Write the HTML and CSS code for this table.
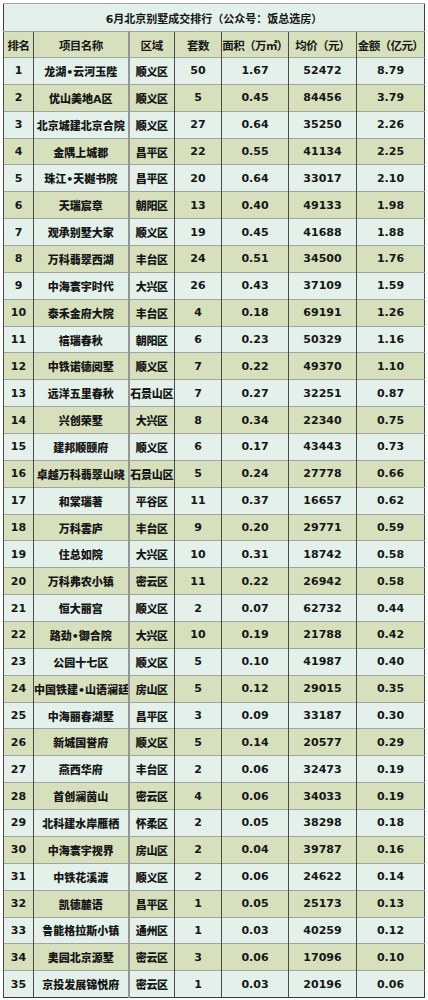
FILE: index.html
```html
<!DOCTYPE html>
<html lang="zh-CN">
<head>
  <meta charset="UTF-8" />
  <meta name="viewport" content="width=device-width, initial-scale=1.0" />
  <title>6月北京别墅成交排行</title>
  <link rel="stylesheet" href="styles.css">
</head>
<body>
  <div class="wrap">
    <table class="rank">
      <colgroup>
        <col class="c-no"><col class="c-name"><col class="c-area"><col class="c-num"><col class="c-size"><col class="c-price"><col class="c-total">
      </colgroup>
      <thead>
        <tr class="title"><th colspan="7">6月北京别墅成交排行（公众号：饭总选房）</th></tr>
        <tr class="head">
          <th>排名</th><th>项目名称</th><th class="area">区域</th><th>套数</th><th>面积（万㎡）</th><th>均价（元）</th><th>金额（亿元）</th>
        </tr>
      </thead>
      <tbody>
        <tr><td>1</td><td>龙湖•云河玉陛</td><td class="area">顺义区</td><td>50</td><td>1.67</td><td>52472</td><td>8.79</td></tr>
        <tr><td>2</td><td>优山美地A区</td><td class="area">顺义区</td><td>5</td><td>0.45</td><td>84456</td><td>3.79</td></tr>
        <tr><td>3</td><td>北京城建北京合院</td><td class="area">顺义区</td><td>27</td><td>0.64</td><td>35250</td><td>2.26</td></tr>
        <tr><td>4</td><td>金隅上城郡</td><td class="area">昌平区</td><td>22</td><td>0.55</td><td>41134</td><td>2.25</td></tr>
        <tr><td>5</td><td>珠江•天樾书院</td><td class="area">昌平区</td><td>20</td><td>0.64</td><td>33017</td><td>2.10</td></tr>
        <tr><td>6</td><td>天瑞宸章</td><td class="area">朝阳区</td><td>13</td><td>0.40</td><td>49133</td><td>1.98</td></tr>
        <tr><td>7</td><td>观承别墅大家</td><td class="area">顺义区</td><td>19</td><td>0.45</td><td>41688</td><td>1.88</td></tr>
        <tr><td>8</td><td>万科翡翠西湖</td><td class="area">丰台区</td><td>24</td><td>0.51</td><td>34500</td><td>1.76</td></tr>
        <tr><td>9</td><td>中海寰宇时代</td><td class="area">大兴区</td><td>26</td><td>0.43</td><td>37109</td><td>1.59</td></tr>
        <tr><td>10</td><td>泰禾金府大院</td><td class="area">丰台区</td><td>4</td><td>0.18</td><td>69191</td><td>1.26</td></tr>
        <tr><td>11</td><td>禧瑞春秋</td><td class="area">朝阳区</td><td>6</td><td>0.23</td><td>50329</td><td>1.16</td></tr>
        <tr><td>12</td><td>中铁诺德阅墅</td><td class="area">顺义区</td><td>7</td><td>0.22</td><td>49370</td><td>1.10</td></tr>
        <tr><td>13</td><td>远洋五里春秋</td><td class="area">石景山区</td><td>7</td><td>0.27</td><td>32251</td><td>0.87</td></tr>
        <tr><td>14</td><td>兴创荣墅</td><td class="area">大兴区</td><td>8</td><td>0.34</td><td>22340</td><td>0.75</td></tr>
        <tr><td>15</td><td>建邦顺颐府</td><td class="area">顺义区</td><td>6</td><td>0.17</td><td>43443</td><td>0.73</td></tr>
        <tr><td>16</td><td>卓越万科翡翠山晓</td><td class="area">石景山区</td><td>5</td><td>0.24</td><td>27778</td><td>0.66</td></tr>
        <tr><td>17</td><td>和棠瑞著</td><td class="area">平谷区</td><td>11</td><td>0.37</td><td>16657</td><td>0.62</td></tr>
        <tr><td>18</td><td>万科雲庐</td><td class="area">丰台区</td><td>9</td><td>0.20</td><td>29771</td><td>0.59</td></tr>
        <tr><td>19</td><td>住总如院</td><td class="area">大兴区</td><td>10</td><td>0.31</td><td>18742</td><td>0.58</td></tr>
        <tr><td>20</td><td>万科弗农小镇</td><td class="area">密云区</td><td>11</td><td>0.22</td><td>26942</td><td>0.58</td></tr>
        <tr><td>21</td><td>恒大丽宫</td><td class="area">顺义区</td><td>2</td><td>0.07</td><td>62732</td><td>0.44</td></tr>
        <tr><td>22</td><td>路劲•御合院</td><td class="area">大兴区</td><td>10</td><td>0.19</td><td>21788</td><td>0.42</td></tr>
        <tr><td>23</td><td>公园十七区</td><td class="area">顺义区</td><td>5</td><td>0.10</td><td>41987</td><td>0.40</td></tr>
        <tr><td>24</td><td>中国铁建•山语澜廷</td><td class="area">房山区</td><td>5</td><td>0.12</td><td>29015</td><td>0.35</td></tr>
        <tr><td>25</td><td>中海丽春湖墅</td><td class="area">昌平区</td><td>3</td><td>0.09</td><td>33187</td><td>0.30</td></tr>
        <tr><td>26</td><td>新城国誉府</td><td class="area">顺义区</td><td>5</td><td>0.14</td><td>20577</td><td>0.29</td></tr>
        <tr><td>27</td><td>燕西华府</td><td class="area">丰台区</td><td>2</td><td>0.06</td><td>32473</td><td>0.19</td></tr>
        <tr><td>28</td><td>首创澜茵山</td><td class="area">密云区</td><td>4</td><td>0.06</td><td>34033</td><td>0.19</td></tr>
        <tr><td>29</td><td>北科建水岸雁栖</td><td class="area">怀柔区</td><td>2</td><td>0.05</td><td>38298</td><td>0.18</td></tr>
        <tr><td>30</td><td>中海寰宇视界</td><td class="area">房山区</td><td>2</td><td>0.04</td><td>39787</td><td>0.16</td></tr>
        <tr><td>31</td><td>中铁花溪渡</td><td class="area">顺义区</td><td>2</td><td>0.06</td><td>24622</td><td>0.14</td></tr>
        <tr><td>32</td><td>凯德麓语</td><td class="area">昌平区</td><td>1</td><td>0.05</td><td>25173</td><td>0.13</td></tr>
        <tr><td>33</td><td>鲁能格拉斯小镇</td><td class="area">通州区</td><td>1</td><td>0.03</td><td>40259</td><td>0.12</td></tr>
        <tr><td>34</td><td>奥园北京源墅</td><td class="area">密云区</td><td>3</td><td>0.06</td><td>17096</td><td>0.10</td></tr>
        <tr><td>35</td><td>京投发展锦悦府</td><td class="area">密云区</td><td>1</td><td>0.03</td><td>20196</td><td>0.06</td></tr>
      </tbody>
    </table>
  </div>
</body>
</html>
```

FILE: styles.css
```css
body { margin: 0; background: #fff; font-family: "DejaVu Sans", "Noto Sans CJK SC", sans-serif; color: #161616; }
.wrap { padding: 3px 0 0 3px; }
.rank { width: 421px; table-layout: fixed; border-collapse: collapse; border: 1px solid #3c3c3c; font-size: 11px; font-weight: 900; }
.c-no { width: 30px; }
.c-name { width: 95px; }
.c-area { width: 46px; }
.c-num { width: 47px; }
.c-size { width: 67px; }
.c-price { width: 68px; }
.c-total { width: 68px; }
.rank th, .rank td { padding: 0; text-align: center; white-space: nowrap; overflow: hidden; border-left: 1px solid #4a4a4a; border-top: 1px solid #a3a3a3; }
.rank td { height: 25.86px; }
.rank .area { border-left: 2px solid #959595; letter-spacing: -0.3px; }
.title th { height: 27px; background: #e4f1eb; font-size: 11px; border-left: none; }
.head th { height: 25px; background: #d7e0bd; font-size: 11.5px; letter-spacing: -0.6px; }
.rank tbody tr:nth-child(odd) td { background: #e4f1eb; }
.rank tbody tr:nth-child(even) td { background: #d7e0bd; }
```
